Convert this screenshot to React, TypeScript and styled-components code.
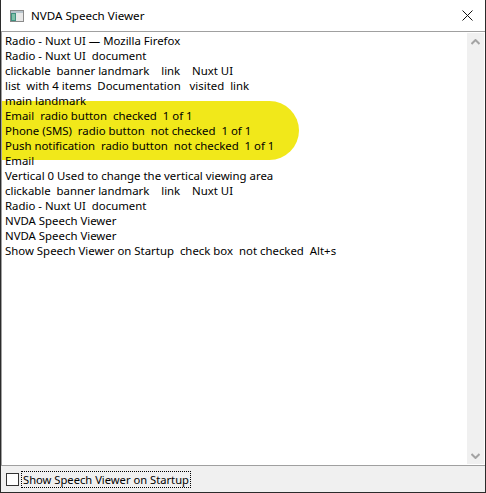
import React from "react";
import styled, {createGlobalStyle} from "styled-components";

const GlobalStyle = createGlobalStyle`
  html, body {
    margin: 0;
    padding: 0;
    background: #ffffff;
  }
  * {
    box-sizing: border-box;
  }
`;

const FONT = `"Noto Sans", "Open Sans", sans-serif`;

const Window = styled.div`
  width: 486px;
  height: 493px;
  display: flex;
  flex-direction: column;
  background: #f0f0f0;
  border: 1px solid #2b2b2b;
  border-top: none;
  font-family: ${FONT};
  font-size: 11.4px;
  color: #000;
  overflow: hidden;
`;

const TitleBar = styled.div`
  height: 31px;
  flex: none;
  display: flex;
  align-items: center;
  background: #ffffff;
  padding-left: 9px;
`;

const TitleText = styled.span`
  margin-left: 7px;
  font-size: 11.6px;
  flex: 1;
`;

const CloseBtn = styled.div`
  width: 36px;
  height: 31px;
  display: flex;
  align-items: center;
  justify-content: center;
`;

const Log = styled.div`
  flex: 1;
  display: flex;
  background: #ffffff;
  border-top: 1px solid #a0a0a0;
  border-bottom: 1px solid #a0a0a0;
  border-left: 1px solid #a0a0a0;
  min-height: 0;
`;

const Lines = styled.div`
  flex: 1;
  position: relative;
  isolation: isolate;
  padding: 1px 0 0 3px;
  line-height: 15px;
  white-space: pre;
  overflow: hidden;
`;

const Line = styled.div`
  height: 15px;
`;

const Highlight = styled.div`
  position: relative;
  &::before {
    content: "";
    position: absolute;
    z-index: -1;
    top: -7px;
    bottom: -7px;
    left: -3px;
    width: 297px;
    background: #f1e81a;
    border-radius: 0 30px 30px 0;
  }
`;

const ScrollBar = styled.div`
  width: 17px;
  flex: none;
  display: flex;
  flex-direction: column;
  justify-content: space-between;
  align-items: center;
  background: #f0f0f0;
  margin: 1px 1px 1px 0;
`;

const Arrow = styled.div`
  height: 17px;
  display: flex;
  align-items: center;
  justify-content: center;
`;

const Footer = styled.div`
  height: 26px;
  flex: none;
  display: flex;
  align-items: center;
  padding-left: 5px;
  background: #f0f0f0;
`;

const Box = styled.span`
  width: 13px;
  height: 13px;
  border: 1px solid #333333;
  background: #ffffff;
  flex: none;
`;

const Label = styled.span`
  margin-left: 3px;
  padding: 0 1px;
  font-size: 11.2px;
  line-height: 15px;
  outline: 1px dotted #000;
`;

const Chevron = ({down}: {down?: boolean}) => (
  <svg width="9" height="6" viewBox="0 0 9 6">
    <path
      d={down ? "M0.5 1 L4.5 5 L8.5 1" : "M0.5 5 L4.5 1 L8.5 5"}
      fill="none"
      stroke="#a3a3a3"
      strokeWidth="2"
    />
  </svg>
);

const before = [
  "Radio - Nuxt UI \u2014 Mozilla Firefox",
  "Radio - Nuxt UI  document",
  "clickable  banner landmark    link    Nuxt UI",
  "list  with 4 items  Documentation   visited  link",
  "main landmark",
];

const highlighted = [
  "Email  radio button  checked  1 of 1",
  "Phone (SMS)  radio button  not checked  1 of 1",
  "Push notification  radio button  not checked  1 of 1",
];

const after = [
  "Email",
  "Vertical 0 Used to change the vertical viewing area",
  "clickable  banner landmark    link    Nuxt UI",
  "Radio - Nuxt UI  document",
  "NVDA Speech Viewer",
  "NVDA Speech Viewer",
  "Show Speech Viewer on Startup  check box  not checked  Alt+s",
];

export default function App() {
  return (
    <>
      <GlobalStyle />
      <Window>
        <TitleBar>
          <svg width="14" height="12" viewBox="0 0 14 12">
            <rect x="0.5" y="0.5" width="13" height="11" fill="#e8e8e8" stroke="#8a8a8a" />
            <rect x="1" y="3" width="5" height="8" fill="#3f8f7f" />
            <rect x="2" y="4" width="3" height="6" fill="#7fc0a8" />
            <rect x="1" y="1" width="12" height="2" fill="#b8c4cc" />
          </svg>
          <TitleText>NVDA Speech Viewer</TitleText>
          <CloseBtn>
            <svg width="11" height="11" viewBox="0 0 11 11">
              <path d="M0.5 0.5 L10.5 10.5 M10.5 0.5 L0.5 10.5" stroke="#111" strokeWidth="1" />
            </svg>
          </CloseBtn>
        </TitleBar>
        <Log>
          <Lines>
            {before.map((t, i) => (
              <Line key={"b" + i}>{t}</Line>
            ))}
            <Highlight>
              {highlighted.map((t, i) => (
                <Line key={"h" + i}>{t}</Line>
              ))}
            </Highlight>
            {after.map((t, i) => (
              <Line key={"a" + i}>{t}</Line>
            ))}
          </Lines>
          <ScrollBar>
            <Arrow>
              <Chevron />
            </Arrow>
            <Arrow>
              <Chevron down />
            </Arrow>
          </ScrollBar>
        </Log>
        <Footer>
          <Box />
          <Label>Show Speech Viewer on Startup</Label>
        </Footer>
      </Window>
    </>
  );
}
